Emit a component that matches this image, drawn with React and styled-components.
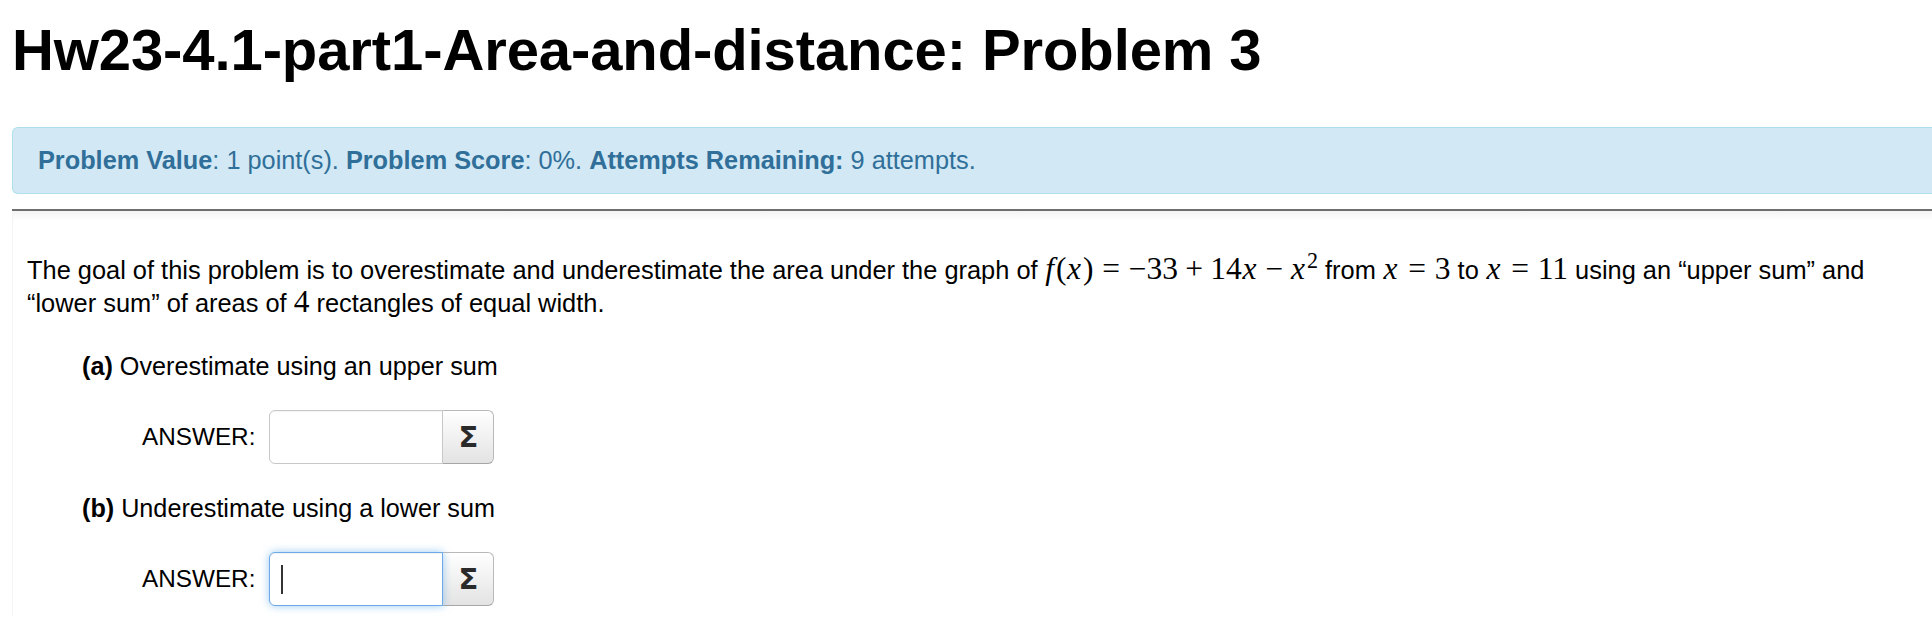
import styled, { createGlobalStyle } from 'styled-components'

const GlobalStyle = createGlobalStyle`
    html, body {
        margin: 0;
        padding: 0;
        background: #fff;
        overflow: hidden;
    }
    body {
        font-family: 'Liberation Sans', Arial, Helvetica, sans-serif;
        color: #000;
    }
`

const Page = styled.div`
    width: 1960px;
    padding: 15px 0 0 12px;
    box-sizing: border-box;
`

const Title = styled.h1`
    margin: 0 0 42px 0;
    font-size: 58px;
    line-height: 1.2;
    font-weight: 700;
    letter-spacing: -0.1px;
`

const InfoAlert = styled.div`
    background: #d2e8f4;
    border: 1px solid #ade0ea;
    border-right: none;
    border-radius: 6px 0 0 6px;
    padding: 18px 0 18px 25px;
    font-size: 25.3px;
    line-height: 29px;
    color: #2f6f99;

    b {
        font-weight: 700;
    }
`

const Rule = styled.hr`
    margin: 15px 0 0 0;
    border: none;
    border-top: 2px solid #6e6e6e;
    height: 0;
`

const ProblemBody = styled.div`
    border-left: 1px solid #f3f3f3;
    background: linear-gradient(#f4f4f4, #fff 10px) top / 100% 10px no-repeat;
    padding: 43px 60px 10px 14px;
    font-size: 25.4px;
    line-height: 33px;
`

const Paragraph = styled.p`
    margin: 0 0 30px 0;
`

const Math = styled.span`
    font-family: 'Liberation Serif', 'Times New Roman', serif;
    font-size: 1.24em;
    line-height: 0;
    white-space: nowrap;
`

const Var = styled.i`
    font-style: italic;
    padding: 0 0.06em 0 0.02em;
`

const Op = styled.span`
    padding: 0 ${(p) => (p.$rel ? '0.28em' : '0.23em')};
`

const Sup = styled.sup`
    font-size: 0.7em;
    line-height: 0;
    vertical-align: 0.5em;
`

const Part = styled.section`
    padding-left: 55px;
    margin-bottom: 28px;
    font-size: 25.2px;

    &:last-child {
        margin-bottom: 0;
    }
`

const PartLabel = styled.div`
    margin-bottom: 27px;

    b {
        font-weight: 700;
    }
`

const AnswerRow = styled.div`
    display: flex;
    align-items: center;
    gap: 14px;
    padding-left: 60px;
`

const AnswerLabel = styled.span`
    font-size: 24.3px;
`

const InputGroup = styled.div`
    display: flex;
    height: 54px;
`

const FieldWrap = styled.div`
    position: relative;
    width: 174px;
    box-sizing: border-box;
    border: 1px solid ${(p) => (p.$focused ? '#6aaae8' : '#c8c8c8')};
    border-radius: 6px 0 0 6px;
    background: #fff;
    box-shadow: ${(p) =>
        p.$focused
            ? 'inset 0 1px 1px rgba(0,0,0,.06), 0 0 9px rgba(102,175,233,.65)'
            : 'inset 0 1px 1px rgba(0,0,0,.05)'};
    z-index: ${(p) => (p.$focused ? 1 : 0)};
`

const Field = styled.input`
    width: 100%;
    height: 100%;
    box-sizing: border-box;
    border: none;
    outline: none;
    background: transparent;
    padding: 0 12px;
    font-family: 'Liberation Sans', Arial, sans-serif;
    font-size: 24px;
`

const Caret = styled.span`
    position: absolute;
    left: 11px;
    top: 12px;
    width: 2px;
    height: 29px;
    background: #333;
`

const SigmaButton = styled.button`
    width: 52px;
    box-sizing: border-box;
    margin-left: -1px;
    border: 1px solid #b9b9b9;
    border-bottom-color: #a6a6a6;
    border-radius: 0 6px 6px 0;
    background: linear-gradient(#ffffff, #e3e3e3);
    font-family: 'DejaVu Sans', 'Liberation Sans', sans-serif;
    font-size: 29px;
    font-weight: 700;
    color: #2a2a2a;
    padding: 0;
    cursor: pointer;
`

function AnswerBox({ focused }) {
    return (
        <AnswerRow>
            <AnswerLabel>ANSWER:</AnswerLabel>
            <InputGroup>
                <FieldWrap $focused={focused}>
                    <Field type="text" />
                    {focused && <Caret />}
                </FieldWrap>
                <SigmaButton>Σ</SigmaButton>
            </InputGroup>
        </AnswerRow>
    )
}

const parts = [
    { label: '(a)', text: 'Overestimate using an upper sum', focused: false },
    { label: '(b)', text: 'Underestimate using a lower sum', focused: true },
]

function App() {
    return (
        <Page>
            <GlobalStyle />
            <Title>Hw23-4.1-part1-Area-and-distance: Problem 3</Title>
            <InfoAlert>
                <b>Problem Value</b>: 1 point(s). <b>Problem Score</b>: 0%.{' '}
                <b>Attempts Remaining:</b> 9 attempts.
            </InfoAlert>
            <Rule />
            <ProblemBody>
                <Paragraph>
                    The goal of this problem is to overestimate and underestimate the area
                    under the graph of{' '}
                    <Math>
                        <Var>f</Var>(<Var>x</Var>)<Op $rel>=</Op>−33<Op>+</Op>14<Var>x</Var>
                        <Op>−</Op>
                        <Var>x</Var>
                        <Sup>2</Sup>
                    </Math>{' '}
                    from{' '}
                    <Math>
                        <Var>x</Var>
                        <Op $rel>=</Op>3
                    </Math>{' '}
                    to{' '}
                    <Math>
                        <Var>x</Var>
                        <Op $rel>=</Op>11
                    </Math>{' '}
                    using an “upper sum” and “lower sum” of areas of <Math>4</Math> rectangles
                    of equal width.
                </Paragraph>
                {parts.map(({ label, text, focused }) => (
                    <Part key={label}>
                        <PartLabel>
                            <b>{label}</b> {text}
                        </PartLabel>
                        <AnswerBox focused={focused} />
                    </Part>
                ))}
            </ProblemBody>
        </Page>
    )
}

export default App
